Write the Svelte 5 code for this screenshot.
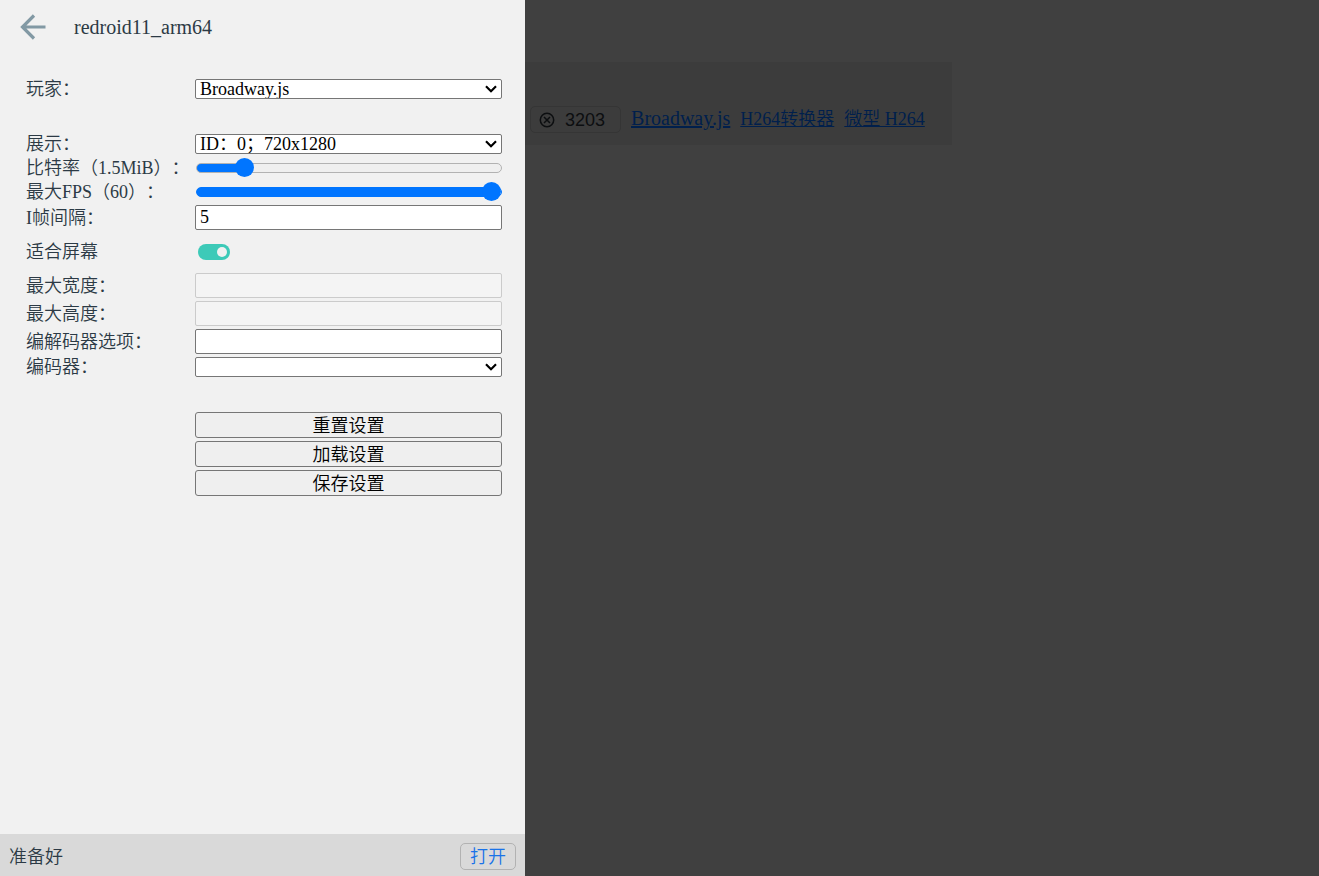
<script>
  let player = $state('Broadway.js');
  let display = $state('ID：0；720x1280');
  let bitrate = $state(1.5);
  let fps = $state(60);
  let interval = $state('5');
  let fit = $state(true);
  let maxWidth = $state('');
  let maxHeight = $state('');
  let codecOptions = $state('');
  let encoder = $state('');

  const bitrateMin = 0.5;
  const bitrateMax = 8;
  const fpsMax = 60;
  const actions = ['重置设置', '加载设置', '保存设置'];
</script>

<div class="page" lang="zh-CN">
  <section class="dialog" aria-labelledby="device">
    <header>
      <button class="back" aria-label="返回">
        <svg viewBox="0 0 26 26" width="26" height="26" aria-hidden="true">
          <path d="M25.500 13H3M14 1.500L2.500 13L14 24.500" fill="none" stroke="#8299a4" stroke-width="3.200" />
        </svg>
      </button>
      <h1 id="device" class="latin">redroid11_arm64</h1>
    </header>

    <form onsubmit={(e) => e.preventDefault()}>
      <div class="group">
        <div class="row">
          <label for="player">玩家：</label>
          <select id="player" bind:value={player}>
            <option>Broadway.js</option>
          </select>
        </div>
      </div>

      <div class="group">
        <div class="row">
          <label for="display">展示：</label>
          <select id="display" bind:value={display}>
            <option>ID：0；720x1280</option>
          </select>
        </div>
        <div class="row">
          <label for="bitrate">比特率（{bitrate}MiB）：</label>
          <input id="bitrate" type="range" min={bitrateMin} max={bitrateMax} step="0.5" bind:value={bitrate}
            style:--fill={(bitrate - bitrateMin) / (bitrateMax - bitrateMin)} />
        </div>
        <div class="row">
          <label for="fps">最大FPS（{fps}）：</label>
          <input id="fps" type="range" min="0" max={fpsMax} bind:value={fps} style:--fill={fps / fpsMax} />
        </div>
        <div class="row">
          <label for="interval">I帧间隔：</label>
          <input id="interval" type="text" bind:value={interval} />
        </div>
        <div class="row tall">
          <label for="fit">适合屏幕</label>
          <input id="fit" type="checkbox" bind:checked={fit} />
        </div>
        <div class="row">
          <label for="max-width">最大宽度：</label>
          <input id="max-width" type="text" disabled={fit} bind:value={maxWidth} />
        </div>
        <div class="row">
          <label for="max-height">最大高度：</label>
          <input id="max-height" type="text" disabled={fit} bind:value={maxHeight} />
        </div>
        <div class="row">
          <label for="codec">编解码器选项：</label>
          <input id="codec" type="text" bind:value={codecOptions} />
        </div>
        <div class="row">
          <label for="encoder">编码器：</label>
          <select id="encoder" bind:value={encoder}>
            <option value=""></option>
          </select>
        </div>
      </div>

      <div class="group actions">
        {#each actions as action}
          <button type="button">{action}</button>
        {/each}
      </div>
    </form>

    <footer>
      <span>准备好</span>
      <button class="open">打开</button>
    </footer>
  </section>

  <main>
    <div class="device">
      <button class="pid">
        <svg viewBox="0 0 16 16" width="16" height="16" aria-hidden="true">
          <g fill="none" stroke="#0c0e10" stroke-width="1.5">
            <circle cx="8" cy="8" r="6.7" />
            <path d="M5 5L11 11M11 5L5 11" />
          </g>
        </svg>
        3203
      </button>
      <nav>
        <a href="#broadway" class="latin">Broadway.js</a>
        <a href="#converter">H264转换器</a>
        <a href="#tiny">微型 H264</a>
      </nav>
    </div>
  </main>
</div>

<style>
  :global(body) {
    margin: 0;
  }

  .page {
    display: grid;
    grid-template-columns: minmax(0, 525fr) minmax(0, 794fr);
    min-height: 100vh;
    background: #404040;
    color: #2c3a45;
    font-family: "Liberation Serif", "Noto Sans CJK SC", serif;
    font-size: 18px;
    font-weight: 350;
    line-height: 20px;
    text-spacing-trim: space-all;
  }

  * {
    box-sizing: border-box;
  }

  button,
  input,
  select {
    margin: 0;
    font: inherit;
    color: #000;
  }

  .latin {
    font-size: 20px;
    font-weight: 400;
  }

  .dialog {
    display: flex;
    flex-direction: column;
    background: #f1f1f1;
  }

  header {
    display: flex;
    align-items: center;
    gap: 28px;
    height: 54px;
    padding-left: 20px;
  }

  h1 {
    margin: 0;
  }

  .back {
    display: flex;
    padding: 0;
    border: 0;
    background: none;
  }

  form {
    display: flex;
    flex: 1;
    flex-direction: column;
    gap: 35px;
    padding: 25px 23px 25px 26px;
  }

  .group {
    display: flex;
    flex-direction: column;
    gap: 3px;
  }

  .row {
    display: grid;
    grid-template-columns: 169px minmax(0, 1fr);
    align-items: center;
  }

  .tall {
    height: 37px;
  }

  label {
    white-space: nowrap;
  }

  select,
  input[type="text"] {
    width: 100%;
    border: 1px solid #767676;
    border-radius: 2px;
    background: #fff;
  }

  select {
    appearance: none;
    height: 20px;
    padding: 0 20px 0 4px;
    background: #fff url("data:image/svg+xml,%3Csvg xmlns='http://www.w3.org/2000/svg' width='12' height='8' viewBox='0 0 12 8'%3E%3Cpath d='M1 1.200L6 6.200L11 1.200' fill='none' stroke='black' stroke-width='2.200'/%3E%3C/svg%3E") right 4px center no-repeat;
    line-height: 18px;
  }

  input[type="text"] {
    height: 25px;
    padding: 0 4px;
  }

  input[type="text"]:disabled {
    border-color: #cbcbcb;
    background: #f4f4f4;
  }

  input[type="range"] {
    display: block;
    appearance: none;
    width: 100%;
    height: 21px;
    background: none;
  }

  input[type="range"]::-webkit-slider-runnable-track {
    height: 10px;
    margin-left: 1px;
    border: 1px solid #b2b2b2;
    border-radius: 5px;
    background: #efefef linear-gradient(#0075ff, #0075ff) 0 0 / calc(10px + (100% - 20px) * var(--fill)) 100% no-repeat border-box;
  }

  #fps::-webkit-slider-runnable-track {
    border-color: #0075ff;
  }

  input[type="range"]::-webkit-slider-thumb {
    appearance: none;
    width: 19px;
    height: 19px;
    margin-top: -6px;
    border-radius: 50%;
    background: #0075ff;
  }

  input[type="checkbox"] {
    display: flex;
    align-items: center;
    justify-content: flex-end;
    appearance: none;
    width: 32px;
    height: 16px;
    margin-left: 3px;
    padding: 0 3px;
    border-radius: 8px;
    background: #b0b0b0;
  }

  input[type="checkbox"]::before {
    content: "";
    width: 10px;
    height: 10px;
    border-radius: 50%;
    background: #f1f1f1;
  }

  input[type="checkbox"]:checked {
    background: #3dcab8;
  }

  input[type="checkbox"]:not(:checked) {
    justify-content: flex-start;
  }

  .actions {
    padding-left: 169px;
  }

  .actions button {
    height: 26px;
    padding: 2px 0 0;
    border: 1px solid #767676;
    border-radius: 3px;
    background: #efefef;
  }

  footer {
    display: flex;
    align-items: center;
    justify-content: space-between;
    height: 42px;
    padding: 2px 9px 0;
    background: #d9d9d9;
  }

  footer span {
    padding-top: 2px;
  }

  .open {
    height: 27px;
    padding: 2px 9px 0;
    border: 1px solid #b2b2b2;
    border-radius: 5px;
    background: none;
    color: #1a73e8;
  }

  main {
    padding-top: 62px;
  }

  .device {
    display: flex;
    align-items: flex-start;
    gap: 10px;
    width: fit-content;
    padding: 44px 27px 12px 5px;
    background: #3c3c3c;
    white-space: nowrap;
  }

  .pid {
    display: flex;
    align-items: center;
    gap: 10px;
    height: 27px;
    padding: 0 15px 0 8px;
    border: 1px solid #353535;
    border-radius: 5px;
    background: none;
    color: #0c0e10;
    font-family: "Liberation Sans", sans-serif;
    font-weight: 400;
  }

  nav {
    display: flex;
    align-items: baseline;
    gap: 10px;
    padding-top: 2px;
  }

  a {
    color: #001f4c;
  }
</style>
